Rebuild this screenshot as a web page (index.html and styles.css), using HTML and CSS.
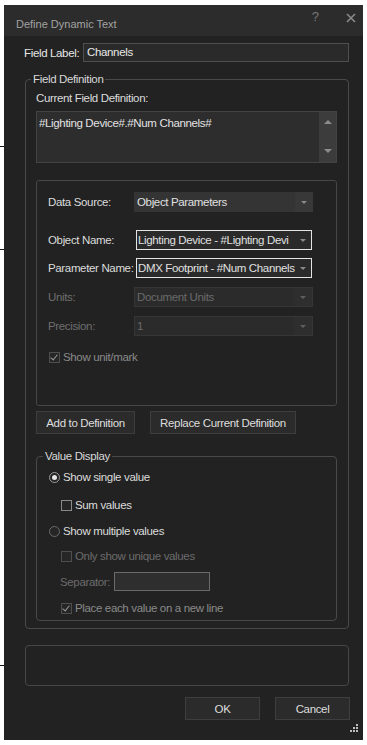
FILE: index.html
```html
<!DOCTYPE html>
<html>
<head>
<meta charset="utf-8">
<link rel="stylesheet" href="styles.css">
</head>
<body>
<div class="dialog">
  <div class="titlebar">
    <span class="title">Define Dynamic Text</span>
    <span class="help">?</span>
    <svg class="close" width="10" height="10" viewBox="0 0 10 10"><path d="M1 1 L9 9 M9 1 L1 9" stroke="#8a8a8a" stroke-width="1.6" fill="none"/></svg>
  </div>
  <div class="content">
    <div class="field-label">
      <span class="lbl">Field Label:</span>
      <div class="input">Channels</div>
    </div>
    <fieldset class="group def">
      <legend>Field Definition</legend>
      <div class="cur-label">Current Field Definition:</div>
      <div class="textarea">
        <span class="ta-text">#Lighting Device#.#Num Channels#</span>
        <div class="scrollbar"><span class="arr up"></span><span class="arr down"></span></div>
      </div>
      <div class="source-box">
        <div class="frow ds">
          <span class="lbl">Data Source:</span>
          <div class="select"><span class="sel-text">Object Parameters</span><span class="arrow-box"><span class="caret"></span></span></div>
        </div>
        <div class="frow obj">
          <span class="lbl">Object Name:</span>
          <div class="select focus"><span class="sel-text">Lighting Device - #Lighting Devi</span><span class="arrow-box"><span class="caret"></span></span></div>
        </div>
        <div class="frow param">
          <span class="lbl">Parameter Name:</span>
          <div class="select focus"><span class="sel-text">DMX Footprint - #Num Channels</span><span class="arrow-box"><span class="caret"></span></span></div>
        </div>
        <div class="frow units disabled">
          <span class="lbl">Units:</span>
          <div class="select"><span class="sel-text">Document Units</span><span class="arrow-box"><span class="caret"></span></span></div>
        </div>
        <div class="frow prec disabled">
          <span class="lbl">Precision:</span>
          <div class="select"><span class="sel-text">1</span><span class="arrow-box"><span class="caret"></span></span></div>
        </div>
        <div class="opt show-unit dim">
          <span class="cb checked"></span><span>Show unit/mark</span>
        </div>
      </div>
      <div class="btn-row">
        <button class="btn add">Add to Definition</button>
        <button class="btn replace">Replace Current Definition</button>
      </div>
      <fieldset class="group value">
        <legend>Value Display</legend>
        <div class="opt single"><span class="radio on"></span><span>Show single value</span></div>
        <div class="opt sum indent"><span class="cb enabled"></span><span>Sum values</span></div>
        <div class="opt multiple"><span class="radio"></span><span>Show multiple values</span></div>
        <div class="opt unique indent disabled"><span class="cb"></span><span>Only show unique values</span></div>
        <div class="sep-row disabled">
          <span class="sep-lbl">Separator:</span>
          <div class="sep-input"></div>
        </div>
        <div class="opt place indent dim"><span class="cb checked"></span><span>Place each value on a new line</span></div>
      </fieldset>
    </fieldset>
    <div class="status-box"></div>
    <div class="dlg-buttons">
      <button class="btn dlg">OK</button>
      <button class="btn dlg">Cancel</button>
    </div>
  </div>
  <svg class="grip" width="10" height="10" viewBox="0 0 10 10">
    <rect x="7" y="1" width="2" height="2" fill="#bdbdbd"/>
    <rect x="4" y="4" width="2" height="2" fill="#bdbdbd"/>
    <rect x="7" y="4" width="2" height="2" fill="#bdbdbd"/>
    <rect x="1" y="7" width="2" height="2" fill="#bdbdbd"/>
    <rect x="4" y="7" width="2" height="2" fill="#bdbdbd"/>
    <rect x="7" y="7" width="2" height="2" fill="#bdbdbd"/>
  </svg>
</div>
</body>
</html>
```

FILE: styles.css
```css
* { box-sizing: border-box; }

body {
  margin: 0;
  background:
    linear-gradient(#151515, #151515) 0 146px / 4px 1px no-repeat,
    linear-gradient(#151515, #151515) 0 249px / 4px 1px no-repeat,
    linear-gradient(#151515, #151515) 0 665px / 4px 1px no-repeat,
    #ffffff;
  font-family: "Liberation Sans", Arial, sans-serif;
  font-size: 11.5px;
  letter-spacing: -0.35px;
  color: #dcdcdc;
}

.dialog {
  position: relative;
  width: 359px;
  height: 735px;
  margin: 5px 0 0 4px;
  background: #222222;
  box-shadow: 0 2px 0 #a0a0a0;
  display: flex;
  flex-direction: column;
}

.titlebar {
  height: 31px;
  background: #2c2c2c;
  display: flex;
  align-items: flex-start;
  padding-left: 12px;
}

.title {
  flex: 1;
  font-size: 11px;
  letter-spacing: 0;
  line-height: 14px;
  margin-top: 12px;
  color: #a3a3a3;
}

.help {
  font-size: 13px;
  letter-spacing: 0;
  line-height: 14px;
  margin-top: 5px;
  color: #777777;
}

.close {
  margin: 8px 7px 0 27px;
}

.content {
  flex: 1;
  display: flex;
  flex-direction: column;
  padding: 0 14px 0 21px;
}

.field-label {
  display: flex;
  align-items: center;
  height: 19px;
  margin-top: 7px;
}

.field-label .lbl {
  width: 59px;
  margin-left: -1px;
  color: #e6e6e6;
  white-space: nowrap;
}

.input {
  flex: 1;
  height: 19px;
  background: #2a2a2a;
  border: 1px solid #4e4e4e;
  padding-left: 3px;
  line-height: 17px;
  color: #e8e8e8;
}

.group {
  border: 1px solid #4a4a4a;
  border-radius: 4px;
  margin: 0;
  min-width: 0;
}

.group legend {
  padding: 0 2px;
  line-height: 14px;
  color: #d8d8d8;
}

.def {
  margin-top: 10px;
  padding: 5px 11px 7px 10px;
}

.def > legend {
  margin-left: -5px;
}

.cur-label {
  line-height: 14px;
}

.textarea {
  margin-top: 6px;
  height: 52px;
  border: 1px solid #434343;
  background: #2d2d2d;
  display: flex;
}

.ta-text {
  flex: 1;
  padding: 4px 0 0 2px;
  line-height: 14px;
  color: #e2e2e2;
  white-space: nowrap;
}

.scrollbar {
  width: 17px;
  background: #3c3c3c;
  display: flex;
  flex-direction: column;
  justify-content: space-between;
  align-items: center;
  padding: 8px 0 9px;
}

.arr {
  width: 0;
  height: 0;
  border-left: 4px solid transparent;
  border-right: 4px solid transparent;
}

.arr.up { border-bottom: 4px solid #8c8c8c; }
.arr.down { border-top: 4px solid #8c8c8c; }

.source-box {
  margin-top: 17px;
  height: 226px;
  border: 1px solid #474747;
  border-radius: 3px;
  padding: 11px 23px 0 11px;
}

.frow {
  display: flex;
  align-items: center;
  height: 20px;
}

.frow .lbl {
  width: 86px;
  color: #dcdcdc;
  white-space: nowrap;
}

.frow.obj { margin-top: 18px; }
.frow.param { margin-top: 8px; }
.frow.units { margin-top: 9px; }
.frow.prec { margin-top: 9px; }

.select {
  width: 179px;
  height: 20px;
  background: #343434;
  display: flex;
  align-items: center;
  overflow: hidden;
}

.sel-text {
  flex: 1;
  padding-left: 3px;
  white-space: nowrap;
  color: #e0e0e0;
  line-height: 14px;
}

.arrow-box {
  width: 18px;
  height: 100%;
  display: flex;
  align-items: center;
  justify-content: center;
  background: #383838;
  flex: none;
}

.caret {
  width: 0;
  height: 0;
  border-left: 3px solid transparent;
  border-right: 3px solid transparent;
  border-top: 3px solid #8a8a8a;
}

.select.focus {
  width: 176px;
  margin-left: 2px;
  background: #2a2a2a;
  border: 1px solid #e4e4e4;
}

.select.focus .sel-text { padding-left: 1px; }
.select.focus .arrow-box { background: #2a2a2a; width: 17px; }

.frow.disabled .lbl { color: #6e6e6e; }

.frow.disabled .select {
  background: #2b2b2b;
  border: 1px solid #363636;
}

.frow.disabled .sel-text { color: #6a6a6a; padding-left: 2px; }
.frow.disabled .arrow-box { background: #2e2e2e; }
.frow.disabled .caret { border-top-color: #5e5e5e; }

.opt {
  display: flex;
  align-items: center;
  height: 14px;
  line-height: 14px;
  white-space: nowrap;
}

.opt.show-unit {
  margin-top: 14px;
  margin-left: 1px;
}

.dim { color: #8a8a8a; }
.disabled { color: #6c6c6c; }

.cb {
  width: 11px;
  height: 11px;
  border: 1px solid #4e4e4e;
  background: #262626;
  margin-right: 3px;
  position: relative;
  flex: none;
}

.cb.enabled { border-color: #8a8a8a; }

.cb.checked::after {
  content: "";
  position: absolute;
  left: 2px;
  top: 0px;
  width: 3px;
  height: 6px;
  border-right: 1.5px solid #9a9a9a;
  border-bottom: 1.5px solid #9a9a9a;
  transform: rotate(40deg);
}

.btn {
  font-family: inherit;
  font-size: 11.5px;
  letter-spacing: -0.35px;
  color: #dedede;
  background: #2b2b2b;
  border: 1px solid #3e3e3e;
  height: 23px;
  padding: 0;
  white-space: nowrap;
}

.btn-row {
  display: flex;
  gap: 15px;
  margin-top: 5px;
}

.btn.add { width: 99px; }
.btn.replace { width: 146px; }

.value {
  margin-top: 15px;
  padding: 7px 0 5px 12px;
}

.value > legend {
  margin-left: -6px;
}

.radio {
  width: 11px;
  height: 11px;
  border-radius: 50%;
  border: 1px solid #6a6a6a;
  background: #262626;
  margin-right: 3px;
  display: flex;
  align-items: center;
  justify-content: center;
  flex: none;
}

.radio.on { border-color: #9a9a9a; }

.radio.on::after {
  content: "";
  width: 5px;
  height: 5px;
  border-radius: 50%;
  background: #e6e6e6;
}

.opt.indent { margin-left: 12px; }
.opt.sum { margin-top: 14px; }
.opt.multiple { margin-top: 12px; }
.opt.unique { margin-top: 11px; }
.opt.place { margin-top: 10px; }

.sep-row {
  display: flex;
  align-items: center;
  height: 19px;
  margin-top: 9px;
  margin-left: 11px;
}

.sep-lbl { width: 54px; white-space: nowrap; }

.sep-input {
  width: 96px;
  height: 19px;
  background: #2e2e2e;
  border: 1px solid #6a6a6a;
}

.status-box {
  margin-top: 16px;
  height: 41px;
  border: 1px solid #474747;
  border-radius: 4px;
}

.dlg-buttons {
  display: flex;
  justify-content: flex-end;
  gap: 15px;
  margin-top: 11px;
  margin-right: -1px;
}

.btn.dlg { width: 75px; }

.grip {
  position: absolute;
  right: 4px;
  bottom: 7px;
}
```
